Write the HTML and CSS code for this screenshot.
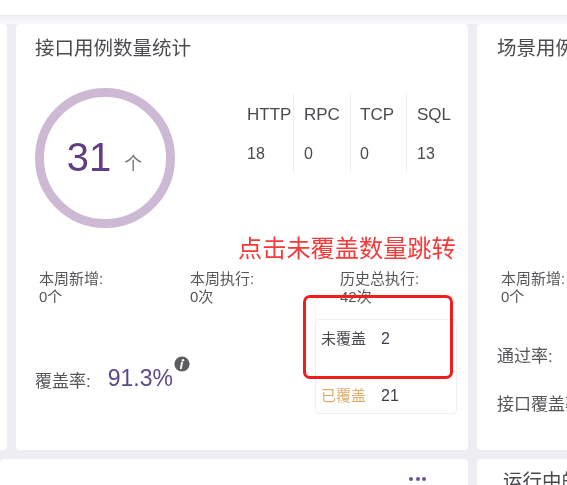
FILE: index.html
```html
<!DOCTYPE html>
<html lang="zh">
<head>
<meta charset="utf-8">
<title>接口用例数量统计</title>
<link rel="stylesheet" href="styles.css">
</head>
<body>
<div class="page">
  <div class="topbar"></div>
  <div class="topgap"></div>
  <div class="board">
    <section class="card"></section>
    <section class="card main">
      <h2 class="title">接口用例数量统计</h2>
      <div class="summary">
        <div class="ring">
          <span class="ring-num">31</span><span class="ring-unit">个</span>
        </div>
        <div class="types">
          <div class="type"><div class="type-name">HTTP</div><div class="type-val">18</div></div>
          <div class="type"><div class="type-name">RPC</div><div class="type-val">0</div></div>
          <div class="type"><div class="type-name">TCP</div><div class="type-val">0</div></div>
          <div class="type"><div class="type-name">SQL</div><div class="type-val">13</div></div>
        </div>
      </div>
      <div class="stats">
        <div class="stat">本周新增:<br>0个</div>
        <div class="stat">本周执行:<br>0次</div>
        <div class="stat">历史总执行:<br>42次</div>
      </div>
      <div class="lower">
        <div class="cover">
          <span class="cover-label">覆盖率:</span>
          <span class="cover-val">91.3%</span>
          <svg class="info" viewBox="0 0 16 16" width="16" height="16" aria-hidden="true">
            <circle cx="8" cy="8" r="7.6" fill="#5c5c62"/>
            <circle cx="9" cy="4.2" r="1.2" fill="#fff"/>
            <path d="M8 6.6 L6.9 12.4" stroke="#fff" stroke-width="1.9" stroke-linecap="round"/>
          </svg>
        </div>
        <div class="panel">
          <div class="panel-row"><span class="panel-label">未覆盖</span><span class="panel-val">2</span></div>
          <div class="panel-row"><span class="panel-label covered">已覆盖</span><span class="panel-val">21</span></div>
        </div>
      </div>
      <div class="note">点击未覆盖数量跳转</div>
      <div class="note-box"></div>
    </section>
    <section class="card side">
      <h2 class="title">场景用例数量统计</h2>
      <div class="stats side-stats">
        <div class="stat">本周新增:<br>0个</div>
      </div>
      <div class="side-line first">通过率:</div>
      <div class="side-line">接口覆盖率:</div>
    </section>
    <section class="card wide">
      <div class="dots"><i></i><i></i><i></i></div>
    </section>
    <section class="card side">
      <h2 class="title low">运行中的任务</h2>
    </section>
  </div>
</div>
</body>
</html>
```
FILE: styles.css
```css
* { box-sizing: border-box; }
html, body { margin: 0; padding: 0; height: 100%; overflow: hidden; background: #fff; }
body { font-family: "Liberation Sans", "Noto Sans CJK SC", sans-serif; color: #4a4a4f; }
.page { width: 567px; height: 485px; overflow: hidden; background: #eeeef2; filter: blur(0.5px); }
.topbar { height: 15px; background: #fff; }
.topgap { height: 9px; background: linear-gradient(#e9e9ed 0, #f3f3f6 25%, #f8f8fa 100%); }
.board {
  display: grid;
  grid-template-columns: 7px 452px 200px;
  grid-template-rows: 426px 120px;
  gap: 9px;
}
.card { background: #fff; border-radius: 4px; }
.card:first-child { border-radius: 0 4px 4px 0; }
.main { position: relative; padding: 12px 0 0 19px; }
.side { padding: 12px 0 0 20px; }
.wide { grid-column: 1 / span 2; position: relative; display: flex; justify-content: flex-end; padding: 18px 42px 0 0; }
.title { margin: 0; font-size: 19.5px; line-height: 24px; font-weight: 400; color: #4a4a4f; white-space: nowrap; }
.title.low { margin-top: -2px; padding-left: 6px; }

.summary { display: flex; align-items: flex-start; margin: 28px 0 0 0; }
.ring {
  width: 140px; height: 140px; flex: none;
  border: 9px solid #cdb9d3; border-radius: 50%;
  display: flex; align-items: center; justify-content: center;
  padding: 0 1px 2px 0;
}
.ring-num { font-size: 40px; line-height: 46px; color: #5f3d85; }
.ring-unit { font-size: 18px; line-height: 22px; color: #77777c; margin: 14px 0 0 13px; }
.types { display: flex; margin: 6px 0 0 61px; }
.type { width: 57px; height: 79px; padding: 11px 0 0 10px; border-right: 1px solid #efeff2; }
.type:nth-child(1) { width: 58px; padding-left: 11px; }
.type:nth-child(3) { width: 56px; padding-left: 9px; }
.type:last-child { border-right: 0; }
.type-name { font-size: 17px; line-height: 20px; }
.type-val { font-size: 16px; line-height: 20px; margin-top: 19px; }

.stats { display: grid; grid-template-columns: 151px 150px 120px; margin: 42px 0 0 4px; }
.stat { font-size: 15px; line-height: 18px; white-space: nowrap; color: #55555a; }
.side-stats { margin-top: 210px; margin-left: 4px; }
.side-line { font-size: 17px; line-height: 22px; white-space: nowrap; margin-top: 26px; color: #55555a; }
.side-line.first { margin-top: 40px; }

.lower { display: flex; justify-content: space-between; align-items: flex-start; margin-top: 13px; padding-right: 11px; }
.cover { display: flex; align-items: flex-start; margin-top: 37px; margin-left: 1px; }
.cover-label { font-size: 17px; line-height: 22px; margin: 15px 0 0 -1px; color: #55555a; }
.cover-val { font-size: 23px; line-height: 28px; color: #5b4a8a; margin: 8px 0 0 17px; }
.info { flex: none; margin-left: 1px; }
.panel {
  width: 142px; height: 95px; flex: none;
  border: 1px solid #f0f0f2; border-radius: 4px;
  padding: 9px 0 0 5px;
  display: flex; flex-direction: column; gap: 37px;
}
.panel-row { display: flex; line-height: 20px; }
.panel-label { width: 60px; font-size: 15px; color: #4a4a4f; }
.panel-label.covered { color: #e0ac6a; }
.panel-val { font-size: 16px; color: #3a3f4a; }

.note {
  position: absolute; left: 222px; top: 211px;
  font-size: 24.2px; line-height: 28px; color: #f53a3a; white-space: nowrap;
}
.note-box {
  position: absolute; left: 287px; top: 271px; width: 150px; height: 84px;
  border: 3px solid #f01d1d; border-radius: 7px;
}
.dots { display: flex; gap: 2.5px; height: 4px; }
.dots i { width: 4px; height: 4px; border-radius: 50%; background: #6d5390; }
```
